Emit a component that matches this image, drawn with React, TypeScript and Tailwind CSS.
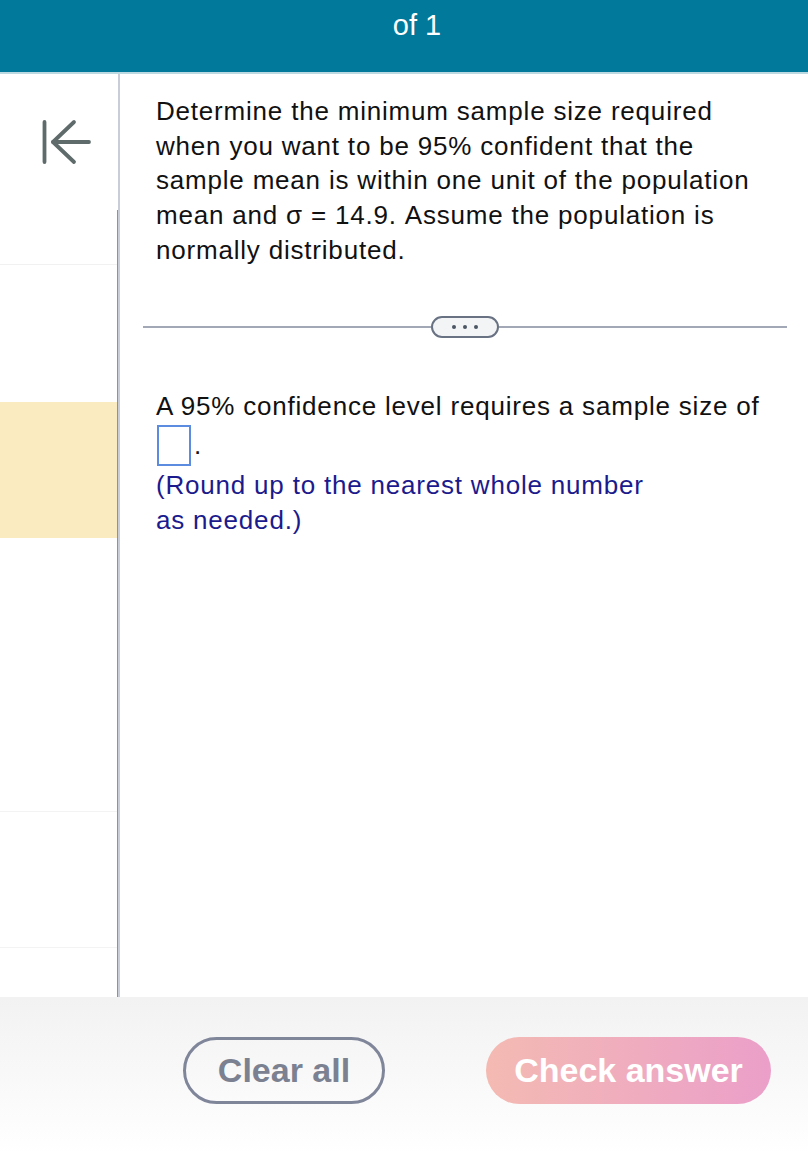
import React from 'react';

const font = { fontFamily: '"Liberation Sans", Arial, sans-serif' };

const CollapseIcon = () => (
  <svg width="52" height="46" viewBox="0 0 52 46" fill="none" stroke="#5f6a6b" strokeWidth="3.8" strokeLinecap="round">
    <line x1="4.5" y1="3" x2="4.5" y2="43" />
    <line x1="13" y1="23" x2="49" y2="23" />
    <polyline points="34,3 13,23 34,43" strokeLinejoin="round" />
  </svg>
);

const Sidebar = () => (
  <div className="flex w-[120px] shrink-0">
    <div className="flex flex-col w-[117px]">
      <div className="h-[191px] pt-[45px] pl-[40px] border-b border-[#f1f1f1]">
        <CollapseIcon />
      </div>
      <div className="h-[137px]" />
      <div className="h-[136px] bg-[#faecc0]" />
      <div className="h-[274px] border-b border-[#f3f3f3]" />
      <div className="h-[136px] border-b border-[#f3f3f3]" />
      <div className="flex-1" />
    </div>
    <div className="flex flex-col w-px">
      <div className="h-[136px]" />
      <div className="flex-1 bg-[#8e9299]" />
    </div>
    <div className="w-[2px] bg-[#c9cdd8]" />
  </div>
);

const Divider = () => (
  <div className="flex items-center ml-[23px] mr-[21px] mt-[48px]">
    <div className="flex-1 h-[2px] bg-[#a2a8b6]" />
    <div className="w-[68px] h-[22px] rounded-full border-2 border-[#687283] bg-[#f3f4f6] flex items-center justify-center gap-[7px]">
      <span className="w-[4px] h-[4px] rounded-full bg-[#4b5563]" />
      <span className="w-[4px] h-[4px] rounded-full bg-[#4b5563]" />
      <span className="w-[4px] h-[4px] rounded-full bg-[#4b5563]" />
    </div>
    <div className="flex-1 h-[2px] bg-[#a2a8b6]" />
  </div>
);

export default function App() {
  return (
    <div className="w-[808px] h-[1154px] flex flex-col bg-white overflow-hidden" style={font}>
      <header className="h-[74px] shrink-0 bg-[#00799b] border-b-2 border-[#bcd9e2] flex justify-center">
        <span className="text-white text-[29px] leading-none mt-[11px] ml-[26px]">of 1</span>
      </header>

      <div className="flex flex-1 min-h-0">
        <Sidebar />
        <main className="flex-1 pt-[20px]">
          <p className="ml-[36px] text-[26px] tracking-[0.8px] leading-[34.7px] text-[#111] whitespace-nowrap">
            Determine the minimum sample size required
            <br />
            when you want to be 95% confident that the
            <br />
            sample mean is within one unit of the population
            <br />
            mean and σ = 14.9. Assume the population is
            <br />
            normally distributed.
          </p>

          <Divider />

          <div className="ml-[36px] mt-[51px] text-[26px] tracking-[0.8px] leading-[34.7px] whitespace-nowrap">
            <p className="text-[#111]">A 95% confidence level requires a sample size of</p>
            <div className="flex items-end mt-[2px]">
              <div className="w-[34px] h-[41px] border-2 border-[#5b8ce0] ml-[1px]" />
              <span className="text-[#111] leading-none mb-[8px] ml-[3px]">.</span>
            </div>
            <p className="text-[#1b1b8d] mt-[2px]">
              (Round up to the nearest whole number
              <br />
              as needed.)
            </p>
          </div>
        </main>
      </div>

      <footer className="h-[157px] shrink-0 bg-gradient-to-b from-[#f2f2f2] to-white flex pt-[40px]">
        <button className="ml-[183px] w-[202px] h-[67px] rounded-full border-[3px] border-[#80869a] text-[#7b8190] text-[34px] font-bold flex items-center justify-center">
          Clear all
        </button>
        <button className="ml-[101px] w-[285px] h-[67px] rounded-full bg-gradient-to-r from-[#f4bab2] to-[#eb9fc9] text-white text-[34px] font-bold flex items-center justify-center">
          Check answer
        </button>
      </footer>
    </div>
  );
}
